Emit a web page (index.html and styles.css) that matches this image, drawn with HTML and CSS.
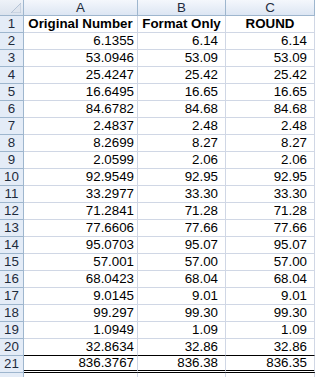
FILE: index.html
```html
<!DOCTYPE html>
<html>
<head>
<meta charset="utf-8">
<link rel="stylesheet" href="styles.css">
</head>
<body>
<div class="sheet">
  <div class="ch corner"><svg class="tri" width="10" height="10" viewBox="0 0 10 10"><polygon points="10,0 10,10 0,10" fill="#dfe5ee" stroke="#b4c3d6" stroke-width="1"/></svg></div>
  <div class="ch">A</div>
  <div class="ch">B</div>
  <div class="ch">C</div>

  <div class="rh">1</div><div class="c hd">Original Number</div><div class="c hd">Format Only</div><div class="c hd">ROUND</div>
  <div class="rh">2</div><div class="c a">6.1355</div><div class="c b">6.14</div><div class="c b">6.14</div>
  <div class="rh">3</div><div class="c a">53.0946</div><div class="c b">53.09</div><div class="c b">53.09</div>
  <div class="rh">4</div><div class="c a">25.4247</div><div class="c b">25.42</div><div class="c b">25.42</div>
  <div class="rh">5</div><div class="c a">16.6495</div><div class="c b">16.65</div><div class="c b">16.65</div>
  <div class="rh">6</div><div class="c a">84.6782</div><div class="c b">84.68</div><div class="c b">84.68</div>
  <div class="rh">7</div><div class="c a">2.4837</div><div class="c b">2.48</div><div class="c b">2.48</div>
  <div class="rh">8</div><div class="c a">8.2699</div><div class="c b">8.27</div><div class="c b">8.27</div>
  <div class="rh">9</div><div class="c a">2.0599</div><div class="c b">2.06</div><div class="c b">2.06</div>
  <div class="rh">10</div><div class="c a">92.9549</div><div class="c b">92.95</div><div class="c b">92.95</div>
  <div class="rh">11</div><div class="c a">33.2977</div><div class="c b">33.30</div><div class="c b">33.30</div>
  <div class="rh">12</div><div class="c a">71.2841</div><div class="c b">71.28</div><div class="c b">71.28</div>
  <div class="rh">13</div><div class="c a">77.6606</div><div class="c b">77.66</div><div class="c b">77.66</div>
  <div class="rh">14</div><div class="c a">95.0703</div><div class="c b">95.07</div><div class="c b">95.07</div>
  <div class="rh">15</div><div class="c a">57.001</div><div class="c b">57.00</div><div class="c b">57.00</div>
  <div class="rh">16</div><div class="c a">68.0423</div><div class="c b">68.04</div><div class="c b">68.04</div>
  <div class="rh">17</div><div class="c a">9.0145</div><div class="c b">9.01</div><div class="c b">9.01</div>
  <div class="rh">18</div><div class="c a">99.297</div><div class="c b">99.30</div><div class="c b">99.30</div>
  <div class="rh">19</div><div class="c a">1.0949</div><div class="c b">1.09</div><div class="c b">1.09</div>
  <div class="rh">20</div><div class="c a pre">32.8634</div><div class="c b pre">32.86</div><div class="c b pre">32.86</div>
  <div class="rh">21</div><div class="c a tot">836.3767</div><div class="c b tot">836.38</div><div class="c b tot">836.35</div>
  <div class="rh"></div><div class="c"></div><div class="c"></div><div class="c"></div>
</div>
</body>
</html>
```
FILE: styles.css
```css
html, body {
  margin: 0;
  padding: 0;
  background: #ffffff;
  overflow: hidden;
}
.sheet {
  display: grid;
  grid-template-columns: 24px 114px 88px 89px;
  grid-template-rows: 16px;
  grid-auto-rows: 17px;
  font-family: "Liberation Sans", Arial, sans-serif;
  font-size: 13.33px;
  line-height: 16px;
  color: #000;
}
.sheet > div {
  box-sizing: border-box;
  white-space: nowrap;
  overflow: hidden;
}
.ch {
  background: linear-gradient(#f4f7fc, #dde6f3);
  border-right: 1px solid #9eb6ce;
  border-bottom: 1px solid #9eb6ce;
  text-align: center;
  line-height: 15px;
  color: #1e2b3c;
}
.corner {
  position: relative;
  background: linear-gradient(#eef2f8, #dbe3ee);
}
.tri {
  position: absolute;
  right: 2px;
  bottom: 2px;
}
.rh {
  background: #e4ecf7;
  border-right: 1px solid #9eb6ce;
  border-bottom: 1px solid #9eb6ce;
  text-align: center;
  color: #1e2b3c;
}
.c {
  border-right: 1px solid #d0d7e5;
  border-bottom: 1px solid #d0d7e5;
}
.hd {
  font-weight: bold;
  text-align: center;
}
.a {
  text-align: right;
  padding-right: 3px;
}
.b {
  text-align: right;
  padding-right: 7px;
}
.pre {
  border-bottom: 1px solid #000;
}
.tot {
  border-bottom: 3px double #000;
  line-height: 14px;
}
```
